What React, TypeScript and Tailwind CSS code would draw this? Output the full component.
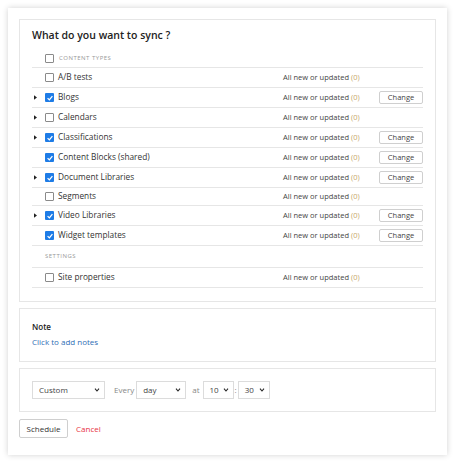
import React from "react"

type Row = {
  label: string
  checked: boolean
  arrow?: boolean
  change?: boolean
  short?: boolean
}

const contentTypes: Row[] = [
  { label: "A/B tests", checked: false },
  { label: "Blogs", checked: true, arrow: true, change: true },
  { label: "Calendars", checked: false, arrow: true },
  { label: "Classifications", checked: true, arrow: true, change: true },
  { label: "Content Blocks (shared)", checked: true, change: true },
  { label: "Document Libraries", checked: true, arrow: true, change: true },
  { label: "Segments", checked: false, short: true },
  { label: "Video Libraries", checked: true, arrow: true, change: true },
  { label: "Widget templates", checked: true, change: true },
]

function Checkbox({ checked }: { checked: boolean }) {
  if (checked) {
    return (
      <span className="flex h-[9px] w-[9px] items-center justify-center rounded-[1px] bg-[#1e7ce6]">
        <svg viewBox="0 0 10 10" className="h-[8px] w-[8px]">
          <path d="M2 5.2 L4.2 7.3 L8 2.6" fill="none" stroke="white" strokeWidth="1.6" />
        </svg>
      </span>
    )
  }
  return <span className="block h-[9px] w-[9px] rounded-[1px] border border-[#8a8a8a] bg-white" />
}

function Arrow() {
  return (
    <svg viewBox="0 0 4 6" className="h-[5px] w-[3px]">
      <path d="M0 0 L4 3 L0 6 Z" fill="#222" />
    </svg>
  )
}

function ItemRow({ row }: { row: Row }) {
  return (
    <div
      className={`flex items-center border-b border-[#e6e6e6] ${row.short ? "h-[18px]" : "h-[20px]"}`}
    >
      <div className="flex w-[13px] items-center pl-[2px]">{row.arrow && <Arrow />}</div>
      <Checkbox checked={row.checked} />
      <span className="ml-[4px] flex-1 text-[8.3px] text-[#333]">{row.label}</span>
      <span className="w-[96px] text-[7.5px] text-[#444]">
        All new or updated <span className="text-[#c8a86a]">(0)</span>
      </span>
      <div className="flex w-[44px] justify-end">
        {row.change && (
          <button className="h-[13px] w-[44px] rounded-[2px] border border-[#cfcfcf] bg-white text-[7.5px] leading-none text-[#444]">
            Change
          </button>
        )}
      </div>
    </div>
  )
}

function Select({ value, width }: { value: string; width: string }) {
  return (
    <div
      className={`flex h-[18px] items-center justify-between border border-[#dcdcdc] bg-white pl-[6px] pr-[4px] text-[8px] text-[#444] ${width}`}
    >
      <span>{value}</span>
      <svg viewBox="0 0 8 6" className="h-[4px] w-[6px]">
        <path d="M1 1 L4 4.5 L7 1" fill="none" stroke="#222" strokeWidth="1.6" />
      </svg>
    </div>
  )
}

export default function App() {
  return (
    <div className="h-[463px] w-[455px] bg-white p-[8px] font-['Open_Sans',sans-serif]">
      <div className="h-[447px] w-[439px] bg-white px-[11px] pt-[11px] shadow-[0_0_6px_rgba(0,0,0,0.18)]">
        {/* sync panel */}
        <div className="border border-[#e6e6e6] px-[12px] pb-[13px]">
          <h2 className="pt-[7px] text-[10.5px] font-semibold leading-[16px] text-[#222]">
            What do you want to sync ?
          </h2>
          <div className="mt-[6px] flex h-[19px] items-center border-b border-[#e6e6e6]">
            <div className="w-[13px]" />
            <Checkbox checked={false} />
            <span className="ml-[5px] text-[6px] tracking-[0.5px] text-[#999]">CONTENT TYPES</span>
          </div>
          {contentTypes.map((r) => (
            <ItemRow key={r.label} row={r} />
          ))}
          <div className="flex h-[22px] items-center border-b border-[#e6e6e6] pl-[13px]">
            <span className="text-[6px] tracking-[0.5px] text-[#999]">SETTINGS</span>
          </div>
          <ItemRow row={{ label: "Site properties", checked: false }} />
        </div>

        {/* note panel */}
        <div className="mt-[6px] h-[54px] border border-[#e6e6e6] px-[12px] pt-[12px]">
          <div className="text-[8px] font-semibold leading-[12px] text-[#222]">Note</div>
          <div className="mt-[3px] text-[8px] leading-[12px] text-[#2f6db5]">Click to add notes</div>
        </div>

        {/* schedule panel */}
        <div className="mt-[6px] flex h-[44px] items-center border border-[#e6e6e6] px-[12px]">
          <Select value="Custom" width="w-[73px]" />
          <span className="ml-[9px] mr-[2px] text-[8px] text-[#888]">Every</span>
          <Select value="day" width="w-[50px]" />
          <span className="ml-[6px] mr-[3px] text-[8px] text-[#888]">at</span>
          <Select value="10" width="w-[31px]" />
          <span className="mx-[1px] text-[8px] text-[#888]">:</span>
          <Select value="30" width="w-[32px]" />
        </div>

        <div className="mt-[7px] flex items-center">
          <button className="h-[19px] w-[49px] rounded-[2px] border border-[#cfcfcf] bg-white text-[8px] text-[#333]">
            Schedule
          </button>
          <span className="ml-[8px] text-[8px] text-[#e8323f]">Cancel</span>
        </div>
      </div>
    </div>
  )
}
